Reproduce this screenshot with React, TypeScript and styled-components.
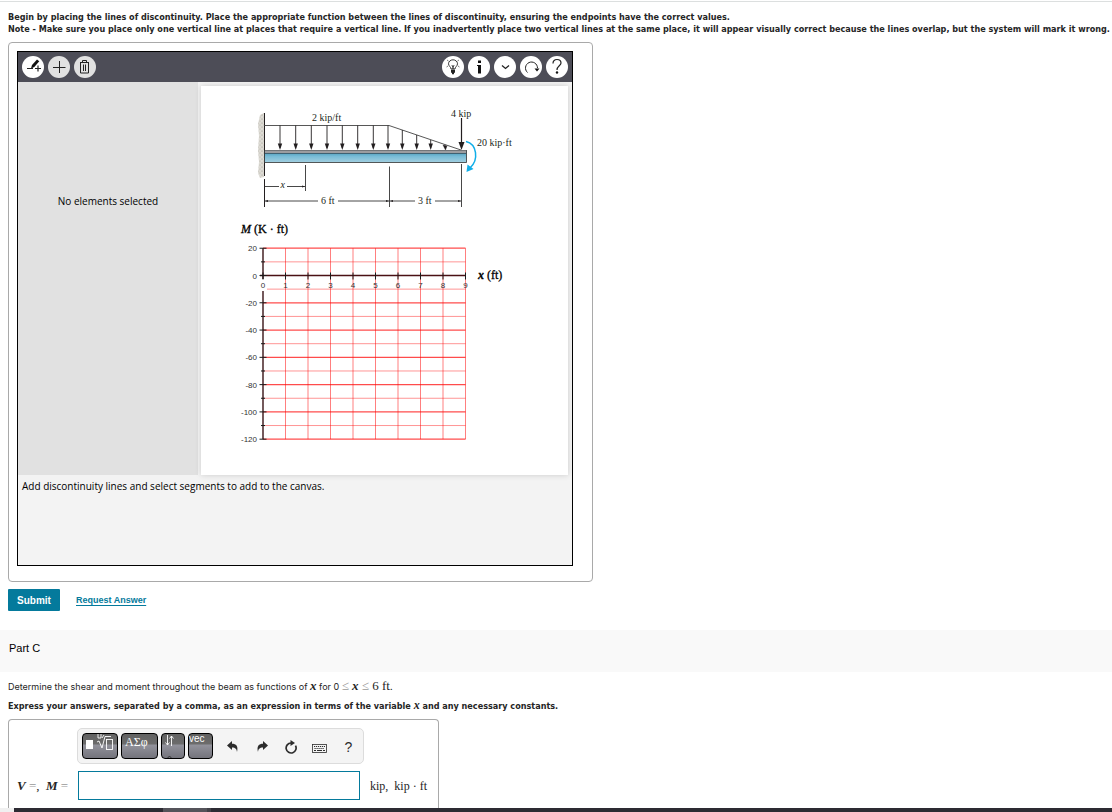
import React from 'react';
import styled, { createGlobalStyle } from 'styled-components';

const sans = '"Liberation Sans", Arial, sans-serif';
const strong = '"DejaVu Sans Condensed", "DejaVu Sans", sans-serif';
const body = 'Inter, "Liberation Sans", sans-serif';
const serif = '"Liberation Serif", "Times New Roman", serif';
const ui = '"Open Sans", "Noto Sans", sans-serif';

const GlobalStyle = createGlobalStyle`
  * { box-sizing: border-box; }
  html, body { margin: 0; padding: 0; background: #fff; }
  body { font-family: ${sans}; font-size: 10px; color: #252525; overflow: hidden; }
  button, input { font-family: inherit; }
`;

const Page = styled.div`
  display: flex;
  flex-direction: column;
  min-height: 100vh;
  padding-top: 1px;
`;

const TopRule = styled.div`
  height: 1px;
  background: #dcdfdf;
`;

const Instructions = styled.p`
  margin: 9px 0 7px 8px;
  font-family: ${strong};
  font-size: 9px;
  font-weight: bold;
  line-height: 12px;
  white-space: nowrap;
`;

const Frame = styled.section`
  margin: 0 8px;
  max-width: 585px;
  padding: 8px 19px 15px 8px;
  border: 1px solid #a9a9a9;
  border-radius: 4px;
`;

const Tool = styled.div`
  border: 1px solid #000;
  background: #f3f3f3;
`;

const ToolBar = styled.div`
  display: flex;
  justify-content: space-between;
  align-items: center;
  height: 30px;
  padding: 0 4px;
  background: #4d4d57;
`;

const Group = styled.div`
  display: flex;
  gap: 4px;
`;

const RoundButton = styled.button<{ $muted?: boolean }>`
  width: 22px;
  height: 22px;
  padding: 0;
  border: 0;
  border-radius: 50%;
  background: ${(p) => (p.$muted ? '#e1e1e1' : '#fff')};
  display: grid;
  place-items: center;
  svg { display: block; }
`;

const Workspace = styled.div`
  display: flex;
  gap: 3px;
  padding-right: 4px;
`;

const SidePanel = styled.div`
  flex: 0 0 180px;
  padding-top: 111px;
  background: #e1e1e1;
  font-family: ${ui};
  font-size: 10px;
  line-height: 16px;
  text-align: center;
  color: #000;
`;

const Canvas = styled.div`
  flex: 1;
  margin-top: 4px;
  background: #fff;
  box-shadow: 0 0 6px rgba(0, 0, 0, 0.16);
  svg { display: block; }
`;

const Message = styled.div`
  min-height: 90px;
  padding: 3px 4px;
  font-family: ${ui};
  font-size: 10px;
  line-height: 16px;
  color: #000;
`;

const Actions = styled.div`
  display: flex;
  align-items: center;
  gap: 16px;
  padding: 7px 8px 19px;
`;

const Submit = styled.button`
  width: 52px;
  height: 22px;
  padding: 0;
  border: 0;
  border-radius: 1px;
  background: #047a9c;
  color: #fff;
  font-size: 10px;
  font-weight: bold;
`;

const Request = styled.a`
  color: #047a9c;
  font-size: 9px;
  line-height: 12px;
  font-weight: bold;
  text-decoration: underline;
  text-underline-offset: 2px;
`;

const PartHeader = styled.h2`
  margin: 0;
  padding: 11px 9px 17px;
  background: #f9f9f9;
  font-size: 11px;
  line-height: 14px;
  font-weight: normal;
  color: #000;
`;

const Question = styled.p<{ $bold?: boolean }>`
  margin: 0 8px;
  padding-top: ${(p) => (p.$bold ? 5 : 8)}px;
  font-family: ${(p) => (p.$bold ? strong : body)};
  font-size: 9px;
  line-height: 14px;
  font-weight: ${(p) => (p.$bold ? 'bold' : 'normal')};
`;

const MathText = styled.span<{ $size?: number }>`
  font-family: ${serif};
  font-size: ${(p) => p.$size || 12}px;
  line-height: 12px;
  white-space: nowrap;
`;

const AnswerBox = styled.section`
  flex: 1;
  margin: 6px 8px 0;
  max-width: 431px;
  padding: 8px 8px 12px;
  border: 1px solid #a9a9a9;
  border-bottom: 0;
  border-radius: 4px 4px 0 0;
`;

const MathBar = styled.div`
  display: flex;
  align-items: center;
  gap: 3px;
  width: 287px;
  height: 36px;
  margin-left: 60px;
  padding: 0 0 0 4px;
  border: 1px solid #dcdcdc;
  border-radius: 5px;
  background: #f4f4f4;
`;

const Palette = styled.button<{ $width: number }>`
  flex: none;
  width: ${(p) => p.$width}px;
  height: 26px;
  padding: 0;
  overflow: hidden;
  border: 1px solid #000;
  border-radius: 4px;
  background: linear-gradient(#626262 0, #6c6c6c 10px, #92929b 11px, #74747c 100%);
  color: #fff;
  svg { display: block; }
`;

const IconRow = styled.div`
  display: flex;
  flex: none;
  padding: 1px 0 0 2px;
`;

const IconButton = styled.button`
  width: 29px;
  height: 22px;
  padding: 0;
  border: 0;
  background: none;
  color: #2c2c2c;
  display: grid;
  place-items: center;
  font-size: 14px;
`;

const AnswerRow = styled.div`
  display: flex;
  align-items: center;
  margin-top: 7px;
`;

const AnswerLabel = styled.label`
  flex: none;
  width: 61px;
  font-family: ${serif};
  font-size: 13px;
  white-space: nowrap;
`;

const Answer = styled.input`
  flex: none;
  width: 282px;
  height: 29px;
  margin-right: 10px;
  padding: 0 6px;
  border: 1px solid #047a9c;
  background: #fff;
  outline: 0;
`;

const Taskbar = styled.div`
  position: fixed;
  left: 0;
  right: 0;
  bottom: 0;
  display: flex;
  height: 4px;
  background: #2d2b33;
`;

const Segment = styled.span<{ $width: number; $tone: string }>`
  width: ${(p) => p.$width}px;
  background: ${(p) => p.$tone};
`;

const Sign = styled.span`
  color: #999;
`;

const Load = ({ x, top }: { x: number; top: number }) => (
  <g>
    <path d={`M${x} ${top}V62`} stroke="#231f20" strokeWidth=".9" />
    <path d={`M${x - 2.2} 57.500h4.400l-2.200 6.500z`} fill="#231f20" />
  </g>
);

const BeamDiagram = () => (
  <g fontFamily={serif} fontSize="10" fill="#231f20">
    <defs>
      <linearGradient id="steel" x2="0" y2="1">
        <stop offset="0" stopColor="#3a8fb0" />
        <stop offset=".5" stopColor="#79bcd6" />
        <stop offset="1" stopColor="#a3cfe0" />
      </linearGradient>
      <pattern id="wall" width="4" height="4" patternUnits="userSpaceOnUse">
        <rect width="4" height="4" fill="#dddbd4" />
        <circle cx="1" cy="1" r=".6" fill="#99958c" />
        <circle cx="3" cy="3" r=".5" fill="#aaa69d" />
      </pattern>
    </defs>
    <path d="M63 27l-4 2-2 9 1 12-1 14 1 12-1 11 2 5 4-1z" fill="url(#wall)" />
    <path d="M63.500 27V90M63.500 93v28" stroke="#231f20" strokeWidth="1" />
    <path d="M63 39.500H188L260 64" fill="none" stroke="#444" strokeWidth=".9" />
    {[79, 94.7, 110.3, 126, 141.3, 156.7, 172.3, 187].map((x) => (
      <Load key={x} x={x} top={39.5} />
    ))}
    <Load x={201.3} top={44} />
    <Load x={215.7} top={49} />
    <Load x={229.7} top={54} />
    <path d="M244 58.500V62M242 59l4 1-1.500 4z" fill="#231f20" stroke="#231f20" strokeWidth=".4" />
    <rect x="63.500" y="64.500" width="202" height="12" fill="url(#steel)" stroke="#333" strokeWidth=".8" />
    <rect x="64" y="64.500" width="201" height="2.700" fill="#9b9c9f" />
    <path d="M64 67.500H265" stroke="#33515f" strokeWidth=".8" />
    <path d="M260.500 32V60" stroke="#231f20" strokeWidth="1.200" />
    <path d="M257.500 56h6l-3 8z" />
    <path d="M265 55.500C276 58 278 74 269 82" fill="none" stroke="#10aee8" strokeWidth="1.500" />
    <path d="M265.500 86l1-7.500 6 4.500z" fill="#10aee8" />
    <g stroke="#333" strokeWidth=".9">
      <path d="M104.500 79v26M188.500 80.500V121M260.500 78v43M63.500 100.500H78M86 100.500h18M63.500 115H117M137 115H214M234 115h26" />
    </g>
    <path d="M104 100.500l-3-1v2zM64 115l3-1v2zM188 115l-3-1v2zM189 115l3-1v2zM260 115l-3-1v2z" />
    <text x="111" y="35">2 kip/ft</text>
    <text x="250" y="31">4 kip</text>
    <text x="276" y="60">20 kip·ft</text>
    <text x="79.500" y="102" fontStyle="italic">x</text>
    <text x="120" y="118">6 ft</text>
    <text x="217" y="118">3 ft</text>
  </g>
);

const colX = (n: number) => 62 + n * 22.5;
const rowY = (v: number) => 189.5 - v * 1.364;

const columns = [0, 1, 2, 3, 4, 5, 6, 7, 8, 9];
const rows = Array.from({ length: 15 }, (_, i) => 20 - i * 10);

const Grid = () => (
  <g>
    {columns.slice(1).map((n) => (
      <path key={n} d={`M${colX(n)} ${rowY(20)}V${rowY(-120)}`} stroke="#ff0000" strokeOpacity=".5" />
    ))}
    {rows.map((v) => (
      <path
        key={v}
        d={`M${v === -10 ? 66 : 62} ${rowY(v)}H${colX(9)}`}
        stroke="#ff0000"
        strokeOpacity={v % 20 === 0 ? 0.7 : 0.42}
        strokeWidth={v % 20 === 0 ? 1.2 : 1}
      />
    ))}
    <path d={`M62 ${rowY(20)}V193M62 205V${rowY(-120)}`} stroke="#3a1418" strokeWidth="1.400" />
    <path d={`M59 ${rowY(0)}H${colX(9)}`} stroke="#4a1014" strokeWidth="1.400" />
    {rows.filter((v) => v !== -10).map((v) => (
      <path key={v} d={v % 20 === 0 ? `M58.500 ${rowY(v)}h7` : `M60 ${rowY(v)}h4`} stroke="#1a1a1a" />
    ))}
    {columns.map((n) => (
      <path key={n} d={`M${colX(n)} ${rowY(0) - 3}v7`} stroke="#1a1a1a" />
    ))}
    <g fontFamily={sans} fontSize="8" fill="#333">
      {columns.map((n) => (
        <text key={n} x={colX(n)} y="202" textAnchor="middle">{n}</text>
      ))}
      {rows.filter((v) => v % 20 === 0).map((v) => (
        <text key={v} x="56" y={rowY(v) + 3} textAnchor="end">{v}</text>
      ))}
    </g>
    <g fontFamily={serif} fontSize="12" fill="#000" stroke="#000" strokeWidth=".3">
      <text x="40" y="147"><tspan fontStyle="italic">M</tspan> (K · ft)</text>
      <text x="277" y="193"><tspan fontStyle="italic" fontWeight="bold">x</tspan> (ft)</text>
    </g>
  </g>
);

const stroke = { fill: 'none', stroke: '#222', strokeWidth: 1 };

export default function App() {
  return (
    <>
      <GlobalStyle />
      <Page>
        <TopRule />
        <Instructions>
          Begin by placing the lines of discontinuity. Place the appropriate function between the lines of
          discontinuity, ensuring the endpoints have the correct values.
          <br />
          Note - Make sure you place only one vertical line at places that require a vertical line. If you
          inadvertently place two vertical lines at the same place, it will appear visually correct because the
          lines overlap, but the system will mark it wrong.
        </Instructions>

        <Frame>
          <Tool>
            <ToolBar>
              <Group>
                <RoundButton aria-label="Add line">
                  <svg width="22" height="22" {...stroke}>
                    <path d="M5 12.500h6M13 12.500h6M16 9.500v6" strokeWidth="1.200" />
                    <path d="M9 12.500l1-3.500 5-5.500 2.300 1.800-5 5.700z" fill="#111" stroke="none" />
                  </svg>
                </RoundButton>
                <RoundButton $muted aria-label="Add element">
                  <svg width="22" height="22" {...stroke}><path d="M5 11.500h12.500M11.500 5v12" /></svg>
                </RoundButton>
                <RoundButton $muted aria-label="Delete">
                  <svg width="22" height="22" {...stroke}>
                    <path d="M6 6.500h9M8.500 6V4.500h4V6M6.500 7v10h8V7M9.500 8.500v6.500M11.500 8.500v6.500" />
                  </svg>
                </RoundButton>
              </Group>
              <Group>
                <RoundButton aria-label="Hint">
                  <svg width="22" height="22" {...stroke} strokeWidth=".9">
                    <path d="M9 13c0-2-2.500-3-2.500-5.200a4.500 4 0 019 0C15.500 10 13 11 13 13z" />
                    <path d="M9.500 9.500l1 1 .5-1.500.5 1.500 1-1M10.500 10v3M11.500 10v3M5 4l1.500 1M17 4l-1.500 1M4.500 11L6 10M17.500 11L16 10" strokeWidth=".6" />
                    <path d="M9 14.500h4M9 16h4M10 17.500h2" strokeWidth="1.300" />
                  </svg>
                </RoundButton>
                <RoundButton aria-label="Information">
                  <svg width="22" height="22"><path d="M10 4.500h3v2.500h-3zM9 9h4v8.500h-3V10H9z" fill="#111" /></svg>
                </RoundButton>
                <RoundButton aria-label="Expand">
                  <svg width="22" height="22" {...stroke}><path d="M8 9.500l3.500 3 3.500-3" strokeWidth="1.300" /></svg>
                </RoundButton>
                <RoundButton aria-label="Reset">
                  <svg width="22" height="22" {...stroke}>
                    <path d="M7.500 16.500A6 6 0 1117.500 12" />
                    <path d="M14.500 12.500h5l-2.500 3z" fill="#111" stroke="none" />
                  </svg>
                </RoundButton>
                <RoundButton aria-label="Help">
                  <svg width="22" height="22" {...stroke}>
                    <path d="M7 7.500c0-2.500 1.500-4 4-4s4 1.300 4 3.500c0 2.800-4 3-4 7" strokeWidth="1.200" />
                    <circle cx="11" cy="16.500" r="1.200" fill="#111" stroke="none" />
                  </svg>
                </RoundButton>
              </Group>
            </ToolBar>
            <Workspace>
              <SidePanel>No elements selected</SidePanel>
              <Canvas>
                <svg width="100%" height="389" viewBox="0 0 367 389" preserveAspectRatio="xMinYMin meet" role="img" aria-label="Moment diagram">
                  <BeamDiagram />
                  <Grid />
                </svg>
              </Canvas>
            </Workspace>
            <Message>Add discontinuity lines and select segments to add to the canvas.</Message>
          </Tool>
        </Frame>

        <Actions>
          <Submit>Submit</Submit>
          <Request href="#answer">Request Answer</Request>
        </Actions>

        <PartHeader>Part C</PartHeader>
        <Question>
          Determine the shear and moment throughout the beam as functions of{' '}
          <MathText $size={13}><b><i>x</i></b></MathText> for 0{' '}
          <MathText $size={13}><Sign>≤</Sign> <b><i>x</i></b> <Sign>≤</Sign> 6 ft</MathText>.
        </Question>
        <Question $bold>
          Express your answers, separated by a comma, as an expression in terms of the variable{' '}
          <MathText><i>x</i></MathText> and any necessary constants.
        </Question>

        <AnswerBox>
          <MathBar>
            <Palette $width={36} aria-label="Templates">
              <svg width="34" height="24" fill="none" stroke="#fff">
                <rect x="3" y="6" width="7" height="9" fill="#fff" stroke="none" />
                <path d="M14 8l2-1 3 7 3-11.500h6M15 0v4h3V0M19 4l2-3" strokeWidth=".9" />
                <rect x="23.500" y="5.500" width="6" height="10" strokeWidth=".9" />
              </svg>
            </Palette>
            <Palette $width={37} aria-label="Greek symbols">
              <svg width="35" height="24"><text x="3" y="12" fill="#fff" fontFamily={serif} fontSize="12">ΑΣφ</text></svg>
            </Palette>
            <Palette $width={24} aria-label="Arrows">
              <svg width="22" height="24" fill="none" stroke="#fff">
                <path d="M5.500 1v10M3.500 8.500l2 2.500 2-2.500M9.500 12V2M7.500 4.500l2-2.500 2 2.500" strokeWidth=".9" />
                <path d="M6 24c0-2 3-2 3 0" stroke="#333" />
              </svg>
            </Palette>
            <Palette $width={25} aria-label="Vector">
              <svg width="23" height="24"><text x="0" y="8" fill="#fff" fontFamily={sans} fontSize="10">vec</text></svg>
            </Palette>
            <IconRow>
              <IconButton aria-label="Undo">
                <svg width="14" height="14" viewBox="0 0 14 14"><path d="M1 5.500L6 1v2.700c4 0 6.500 2 5 8.300-.3-3-1.500-4.500-5-4.500V10z" fill="currentColor" /></svg>
              </IconButton>
              <IconButton aria-label="Redo">
                <svg width="14" height="14" viewBox="0 0 14 14"><path d="M13 5.500L8 1v2.700c-4 0-6.500 2-5 8.300.3-3 1.500-4.500 5-4.500V10z" fill="currentColor" /></svg>
              </IconButton>
              <IconButton aria-label="Reset answer">
                <svg width="14" height="14" viewBox="0 0 14 14">
                  <path d="M7 3a5 5 0 104.500 2.600" fill="none" stroke="currentColor" strokeWidth="1.700" />
                  <path d="M6.500 0l4.500 3-4.500 3z" fill="currentColor" />
                </svg>
              </IconButton>
              <IconButton aria-label="Keyboard">
                <svg width="15" height="14" viewBox="0 0 15 14" fill="none" stroke="currentColor">
                  <rect x=".5" y="4.500" width="14" height="8" strokeWidth=".8" />
                  <path d="M2 6.500h11M2.500 8.500h10" strokeDasharray="1.200 .8" />
                  <path d="M2 10.500h2M5 10.500h5M11 10.500h2" />
                </svg>
              </IconButton>
              <IconButton aria-label="Help">?</IconButton>
            </IconRow>
          </MathBar>
          <AnswerRow>
            <AnswerLabel htmlFor="answer">
              <b><i>V</i></b> <Sign>=</Sign>,&nbsp; <b><i>M</i></b> <Sign>=</Sign>
            </AnswerLabel>
            <Answer id="answer" />
            <MathText $size={12}>kip,&nbsp; kip · ft</MathText>
          </AnswerRow>
        </AnswerBox>
      </Page>
      <Taskbar>
        <Segment $width={14} $tone="#f0f0f0" />
        <Segment $width={149} $tone="#2d2b33" />
        <Segment $width={44} $tone="#55535a" />
        <Segment $width={4} $tone="#424047" />
      </Taskbar>
    </>
  );
}
